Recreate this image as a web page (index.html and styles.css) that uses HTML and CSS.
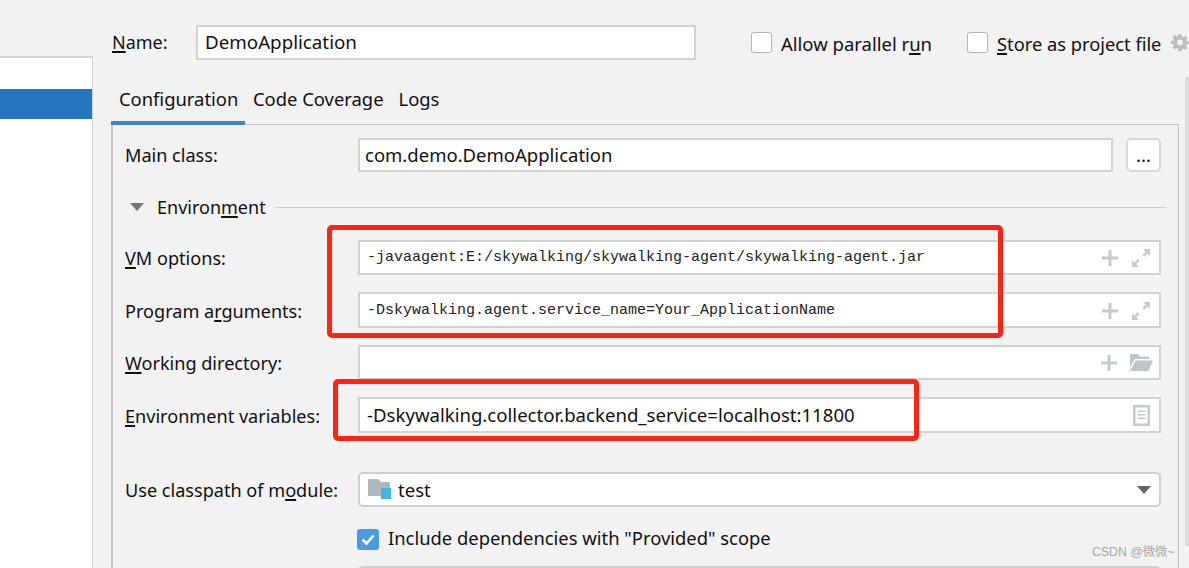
FILE: index.html
```html
<!DOCTYPE html>
<html lang="en">
<head>
<meta charset="utf-8">
<title>Run Configuration</title>
<link rel="stylesheet" href="styles.css">
</head>
<body>
<aside class="sidebar"><div class="selected"></div></aside>
<main class="main">
  <div class="top">
    <label class="name-label"><u>N</u>ame:</label>
    <div class="field name-field"><span class="lift">DemoApplication</span></div>
    <span class="box first"></span><span class="check-text first-text">Allow parallel r<u>u</u>n</span>
    <span class="box second"></span><span class="check-text second-text"><u>S</u>tore as project file</span>
    <svg class="gear" viewBox="0 0 24 24"><path fill="#bdbdbd" fill-rule="evenodd" d="M10 1h4l.6 3.200 1.900.8 2.700-1.800 2.800 2.800-1.800 2.700.8 1.900L24 10v4l-3.200.6-.8 1.900 1.800 2.700-2.800 2.800-2.700-1.800-1.900.8L14 23.800h-4l-.6-3.800-1.900-.8-2.700 1.800-2.800-2.800 1.800-2.700-.8-1.900L0 14v-4l3.200-.6.8-1.900L2.200 4.800 5 2l2.700 1.800 1.900-.8zM12 8a4 4 0 1 0 0 8 4 4 0 0 0 0-8z"/></svg>
  </div>
  <nav class="tabs">
    <span class="tab active">Configuration</span>
    <span class="tab">Code Coverage</span>
    <span class="tab">Logs</span>
  </nav>
  <section class="panel">
    <div class="row main-row">
      <label>Main class:</label>
      <div class="field">com.demo.DemoApplication</div>
      <button class="more">...</button>
    </div>
    <div class="env-head">
      <svg class="tri" viewBox="0 0 14 8"><path fill="#777" d="M0 0h14L7 8z"/></svg>
      <span>Environ<u>m</u>ent</span>
      <i class="rule"></i>
    </div>
    <div class="row vm">
      <label><u>V</u>M options:</label>
      <div class="field mono"><span class="grow">-javaagent:E:/skywalking/skywalking-agent/skywalking-agent.jar</span>
        <svg class="plus wide" viewBox="0 0 16 16"><path d="M8 0v16M0 8h16"/></svg>
        <svg class="expand" viewBox="0 0 18 18"><path d="M18 0v7l-2.400-2.400-3.300 3.300-1.900-1.900 3.300-3.300L11.300 0zM0 18v-7l2.400 2.400 3.300-3.300 1.900 1.900-3.300 3.300L6.700 18z"/></svg>
      </div>
    </div>
    <div class="row tall">
      <label>Program a<u>r</u>guments:</label>
      <div class="field mono"><span class="grow">-Dskywalking.agent.service_name=Your_ApplicationName</span>
        <svg class="plus wide" viewBox="0 0 16 16"><path d="M8 0v16M0 8h16"/></svg>
        <svg class="expand" viewBox="0 0 18 18"><path d="M18 0v7l-2.400-2.400-3.300 3.300-1.900-1.900 3.300-3.300L11.300 0zM0 18v-7l2.400 2.400 3.300-3.300 1.900 1.900-3.300 3.300L6.700 18z"/></svg>
      </div>
    </div>
    <div class="row">
      <label><u>W</u>orking directory:</label>
      <div class="field"><span class="grow"></span>
        <svg class="plus" viewBox="0 0 16 16"><path d="M8 0v16M0 8h16"/></svg>
        <svg class="folder" viewBox="0 0 23 17"><path d="M0 0h8l2 2.500h9V5H5L0 13zM5.500 6.500H23L18.500 17H0z"/></svg>
      </div>
    </div>
    <div class="row tall">
      <label><u>E</u>nvironment variables:</label>
      <div class="field"><span class="grow">-Dskywalking.collector.backend_service=localhost:11800</span>
        <svg class="doc" viewBox="0 0 17 21"><path fill-rule="evenodd" d="M0 0h17v21H0zM2.500 2.500v16h12v-16zM4.500 5.500h8V7h-8zM4.500 9h8v1.500h-8zM4.500 12.500h8V14h-8z"/></svg>
      </div>
    </div>
    <div class="row module">
      <label>Use classpath of m<u>o</u>dule:</label>
      <div class="field select">
        <svg class="mod" viewBox="0 0 23 21"><path fill="#afb8bf" d="M0 0h10l3 3h9v14H0z"/><path fill="#3fb5e3" d="M13 9h10v11H13z"/></svg>
        <span class="grow">test</span>
        <svg class="arrow" viewBox="0 0 14 8"><path fill="#666" d="M0 0h14L7 8z"/></svg>
      </div>
    </div>
    <div class="row include">
      <span></span>
      <div class="include-line">
        <svg class="checked" viewBox="0 0 22 21"><rect width="22" height="21" rx="3" fill="#4e9ae2"/><path d="M5.500 10.500l4 4 7-8" fill="none" stroke="#fff" stroke-width="2.600"/></svg>
        <span class="lift">Include dependencies with "Provided" scope</span>
      </div>
    </div>
    <div class="row next">
      <span></span>
      <div class="field select"></div>
    </div>
  </section>
</main>
<div class="stripe"></div>
<div class="mark one"></div>
<div class="mark two"></div>
<div class="watermark">CSDN @微微~</div>
</body>
</html>
```
FILE: styles.css
```css
* { box-sizing: border-box; }
html, body { margin: 0; height: 568px; }
body {
  display: flex;
  position: relative;
  overflow: hidden;
  background: #f2f2f2;
  color: #111;
  font: 18.6px/24px "Noto Sans", "Open Sans", sans-serif;
}
u { text-underline-offset: 2px; text-decoration-thickness: 1.500px; }
label { font-size: 18.100px; }

.sidebar {
  flex: none;
  width: 93px;
  margin-top: 56px;
  background: #fff;
  border-top: 2px solid #d4d4d4;
  border-right: 1px solid #d4d4d4;
}
.selected { height: 30px; margin-top: 31px; background: #2675bf; }

.main { flex: none; width: 1092px; height: 568px; padding: 25px 6px 0 18px; }

.top { display: flex; align-items: center; height: 35px; white-space: nowrap; }
.name-label { width: 85px; padding: 0 0 2px 1px; flex: none; font-size: 18px; }
.field {
  display: flex;
  align-items: center;
  min-width: 0;
  background: #fff;
  border: 2px solid #d2d2d2;
  padding-left: 7px;
  white-space: nowrap;
}
.name-field { width: 500px; height: 35px; flex: none; font-size: 18.750px; }
.lift { padding-bottom: 2px; }
.box {
  flex: none;
  width: 21px;
  height: 21px;
  background: #fff;
  border: 1px solid #b4b4b4;
  border-radius: 3px;
}
.box.first { margin-left: 55px; }
.box.second { margin-left: 35px; }
.check-text { margin-left: 9px; padding-top: 2px; }
.first-text { font-size: 18.500px; }
.second-text { font-size: 18.300px; }
.gear { flex: none; width: 18px; height: 21px; margin-left: 10px; }

.tabs { display: flex; height: 65px; padding-top: 26px; font-size: 18.400px; }
.tab { padding: 0 7px 0 8px; height: 39px; line-height: 26px; }
.tab.active { width: 134px; border-bottom: 4px solid #4083c9; }

.panel {
  height: 444px;
  margin-top: -1px;
  padding: 13px 12px 0 12px;
  overflow: hidden;
  border: 1px solid #c4c4c4;
  border-left-width: 2px;
  border-bottom: 0;
}
.row { display: grid; grid-template-columns: 233px 1fr; align-items: stretch; height: 35px; margin: 17px 5px 0 0; }
.row label { align-self: center; white-space: nowrap; }
.main-row { grid-template-columns: 220px 1fr 35px; column-gap: 13px; margin-top: 0; height: 34px; }
.main-row .field { font-size: 18.500px; padding-left: 5px; }
.more {
  padding: 0;
  background: #fff;
  border: 2px solid #d8d8d8;
  border-radius: 5px;
  font: inherit;
  color: #111;
}

.env-head { display: flex; align-items: center; height: 20px; margin-top: 25px; font-size: 18px; }
.tri { flex: none; width: 14px; height: 8px; margin: 0 13px 0 5px; }
.rule { flex: 1; height: 1px; margin-left: 9px; background: #d0d0d0; }

.vm { margin-top: 23px; }
.tall { height: 36px; }
.row.tall label, .module label { padding-top: 1px; }
.tall .mono { padding-top: 1px; }
.grow { flex: 1; min-width: 0; }
.mono { font: 15px/20px "Liberation Mono", monospace; color: #222; }

.plus { flex: none; width: 16px; height: 16px; margin-right: 13px; fill: none; stroke: #c6cbcf; stroke-width: 3; }
.plus.wide { margin-right: 14px; }
.expand { flex: none; width: 18px; height: 18px; margin-right: 9px; fill: #c6cbcf; }
.folder { flex: none; width: 23px; height: 17px; margin-right: 6px; fill: #c0c5c9; }
.doc { flex: none; width: 17px; height: 21px; margin-right: 9px; fill: #c6cbcf; }

.module { margin-top: 39px; }
.select { border-radius: 5px; padding-left: 8px; border-color: #cfcfcf; }
.select .grow { padding-top: 1px; }
.mod { flex: none; width: 23px; height: 21px; margin-right: 7px; }
.arrow { flex: none; width: 14px; height: 8px; margin-right: 8px; }

.include { margin-top: 19px; height: 21px; }
.include-line { display: flex; align-items: center; gap: 9px; margin-left: -1px; white-space: nowrap; font-size: 18.400px; }
.checked { flex: none; width: 22px; height: 21px; }
.next { margin-top: 19px; }

.stripe { flex: none; width: 4px; height: 469px; margin-top: 77px; background: #dcdcdc; }

.mark { position: absolute; border: 5px solid #ff2314; border-radius: 5px; }
.mark.one { left: 327px; top: 225px; width: 676px; height: 113px; }
.mark.two { left: 333px; top: 379px; width: 586px; height: 62px; }

.watermark {
  position: absolute;
  left: 1092px;
  top: 544px;
  font: 12.300px/16px "Liberation Sans", "Noto Sans CJK SC", sans-serif;
  color: #a8a8a8;
  white-space: nowrap;
}
```
